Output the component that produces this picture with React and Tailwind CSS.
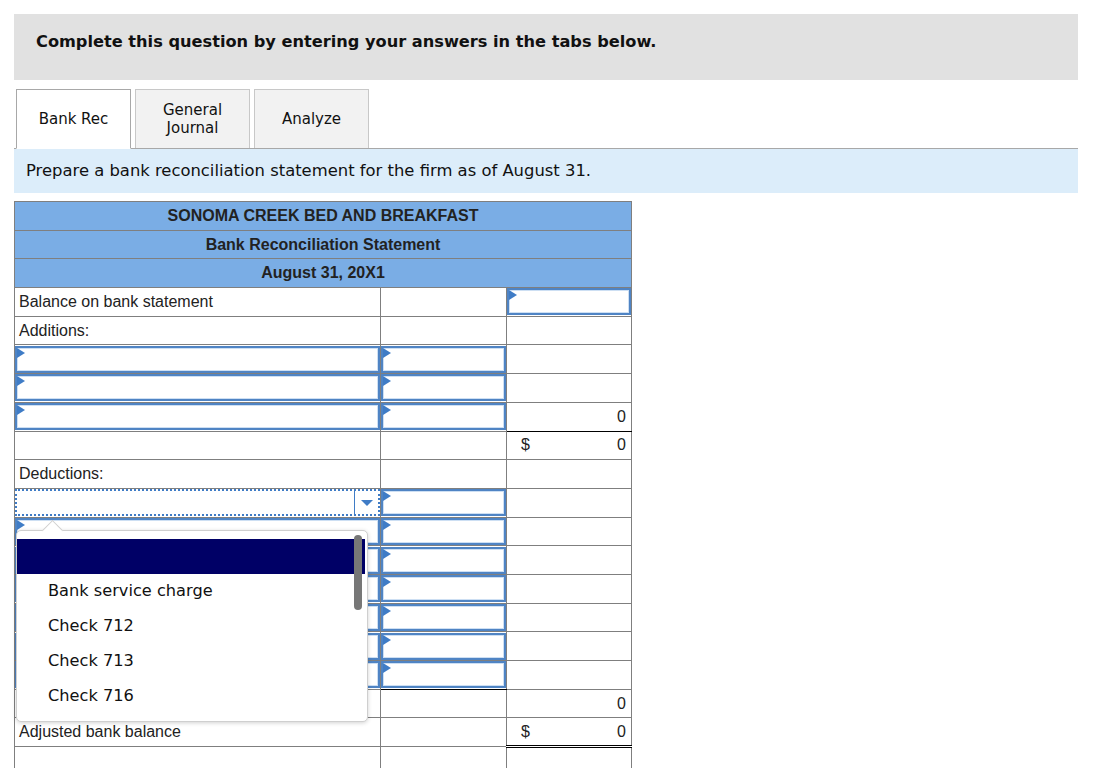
import React from 'react';

const cellBase = 'border border-[#7f7f7f] h-[28.7px] p-0 align-middle';

function Flag() {
  return (
    <span className="absolute left-0 top-0 w-0 h-0 border-l-[8px] border-l-[#3f7cc6] border-y-[5px] border-y-transparent" />
  );
}

function InputBox() {
  return (
    <div className="relative h-[27px] w-full border-2 border-[#4f84c4] bg-white shadow-[inset_0_0_0_1px_#cddff3]">
      <Flag />
    </div>
  );
}

function Label({ children }) {
  return <div className="px-[4px] text-[16px] text-[#222]">{children}</div>;
}

function Amount({ dollar, value }) {
  return (
    <div className="flex items-center justify-between px-[5px] text-[16px] text-[#222]">
      <span className="pl-[9px]">{dollar ? '$' : ''}</span>
      <span>{value}</span>
    </div>
  );
}

export default function App() {
  const rows = [
    { a: <Label>Balance on bank statement</Label>, b: null, c: <InputBox /> },
    { a: <Label>Additions:</Label> },
    { a: <InputBox />, b: <InputBox /> },
    { a: <InputBox />, b: <InputBox /> },
    { a: <InputBox />, b: <InputBox />, c: <Amount value="0" />, cLine: 'border-b-black' },
    { c: <Amount dollar value="0" /> },
    { a: <Label>Deductions:</Label> },
    { a: 'select', b: <InputBox /> },
    { a: <InputBox />, b: <InputBox /> },
    { a: <InputBox />, b: <InputBox /> },
    { a: <InputBox />, b: <InputBox /> },
    { a: <InputBox />, b: <InputBox /> },
    { a: <InputBox />, b: <InputBox /> },
    { a: <InputBox />, b: <InputBox />, bLine: 'border-b-black' },
    { c: <Amount value="0" />, cLine: 'border-b-black' },
    { a: <Label>Adjusted bank balance</Label>, c: <Amount dollar value="0" />, cLine: 'border-b-[3px] border-b-black border-double' },
    {},
  ];

  return (
    <div className="min-h-screen bg-white pt-[14px] pl-[14px] pr-[24px] font-['DejaVu_Sans',Verdana,sans-serif] text-[#111]">
      <div className="h-[66px] bg-[#e1e1e1] flex items-start pt-[16px] pl-[22px]">
        <h1 className="text-[16.2px] font-bold">Complete this question by entering your answers in the tabs below.</h1>
      </div>

      <div className="mt-[9px] flex items-end gap-[4px] border-b border-[#a8a8a8] pl-[2px] h-[60px]">
        <div className="w-[115px] h-[60px] -mb-px bg-white border border-[#a8a8a8] border-b-white flex items-center justify-center text-[15px]">
          Bank Rec
        </div>
        <div className="w-[115px] h-[59px] bg-[#f2f2f2] border border-[#c8c8c8] border-b-0 flex items-center justify-center text-center text-[15px] leading-[18px]">
          General<br />Journal
        </div>
        <div className="w-[115px] h-[59px] bg-[#f2f2f2] border border-[#c8c8c8] border-b-0 flex items-center justify-center text-[15px]">
          Analyze
        </div>
      </div>

      <div className="h-[44px] bg-[#dcedfa] flex items-center pl-[12px] text-[16.4px]">
        Prepare a bank reconciliation statement for the firm as of August 31.
      </div>

      <div className="relative mt-[8px] font-['Liberation_Sans',Arial,sans-serif]">
        <table className="border-collapse table-fixed w-[617px]">
          <colgroup>
            <col className="w-[366px]" />
            <col className="w-[126px]" />
            <col className="w-[125px]" />
          </colgroup>
          <tbody>
            {['SONOMA CREEK BED AND BREAKFAST', 'Bank Reconciliation Statement', 'August 31, 20X1'].map((t) => (
              <tr key={t}>
                <td colSpan={3} className={`${cellBase} bg-[#7aade5] text-center text-[16px] font-bold text-[#222]`}>
                  {t}
                </td>
              </tr>
            ))}
            {rows.map((r, i) => (
              <tr key={i}>
                <td className={cellBase}>
                  {r.a === 'select' ? (
                    <div className="relative h-[27px] border-2 border-dotted border-[#3f7cc6] flex justify-end">
                      <div className="w-[24px] h-full border-l border-[#3f7cc6] flex items-center justify-center">
                        <span className="w-0 h-0 border-x-[6px] border-x-transparent border-t-[6px] border-t-[#3f7cc6]" />
                      </div>
                    </div>
                  ) : (
                    r.a
                  )}
                </td>
                <td className={`${cellBase} ${r.bLine || ''}`}>{r.b}</td>
                <td className={`${cellBase} ${r.cLine || ''}`}>{r.c}</td>
              </tr>
            ))}
          </tbody>
        </table>

        {/* open dropdown list */}
        <div className="absolute left-[2px] top-[329px] w-[352px] h-[192px] bg-white border border-[#cfcfcf] rounded-[5px] shadow-[0_1px_4px_rgba(0,0,0,0.18)] font-['DejaVu_Sans',Verdana,sans-serif]">
          <div className="absolute left-[28px] -top-[8px] w-[15px] h-[15px] bg-white border-l border-t border-[#cfcfcf] rotate-45" />
          <div className="relative mt-[8px] h-[35px] bg-[#000066] mr-[2px]" />
          <div className="absolute right-[5px] top-[4px] w-[8px] h-[75px] rounded-full bg-[#777]" />
          <ul className="text-[16.2px] text-[#111]">
            {['Bank service charge', 'Check 712', 'Check 713', 'Check 716'].map((o) => (
              <li key={o} className="h-[35px] flex items-center pl-[31px]">
                {o}
              </li>
            ))}
          </ul>
        </div>
      </div>
    </div>
  );
}
